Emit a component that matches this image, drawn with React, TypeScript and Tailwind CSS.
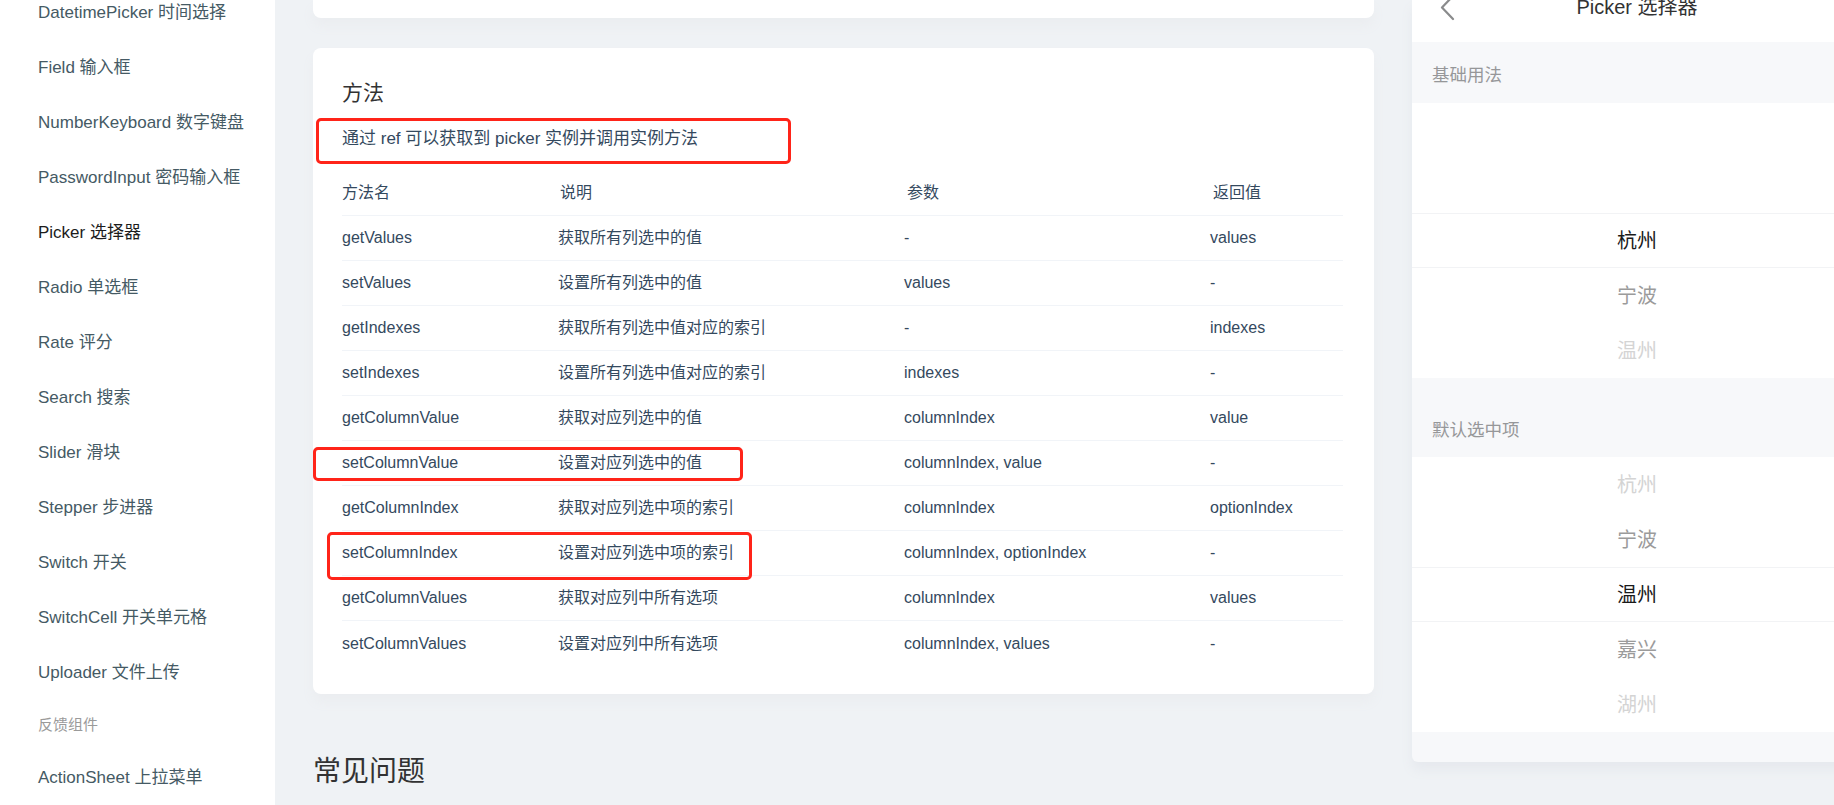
import React from "react";

const FONT = { fontFamily: '"Liberation Sans", Arial, "Noto Sans CJK SC", sans-serif' };

const navItems = [
  "DatetimePicker 时间选择",
  "Field 输入框",
  "NumberKeyboard 数字键盘",
  "PasswordInput 密码输入框",
  "Picker 选择器",
  "Radio 单选框",
  "Rate 评分",
  "Search 搜索",
  "Slider 滑块",
  "Stepper 步进器",
  "Switch 开关",
  "SwitchCell 开关单元格",
  "Uploader 文件上传",
];

const rows: [string, string, string, string][] = [
  ["getValues", "获取所有列选中的值", "-", "values"],
  ["setValues", "设置所有列选中的值", "values", "-"],
  ["getIndexes", "获取所有列选中值对应的索引", "-", "indexes"],
  ["setIndexes", "设置所有列选中值对应的索引", "indexes", "-"],
  ["getColumnValue", "获取对应列选中的值", "columnIndex", "value"],
  ["setColumnValue", "设置对应列选中的值", "columnIndex, value", "-"],
  ["getColumnIndex", "获取对应列选中项的索引", "columnIndex", "optionIndex"],
  ["setColumnIndex", "设置对应列选中项的索引", "columnIndex, optionIndex", "-"],
  ["getColumnValues", "获取对应列中所有选项", "columnIndex", "values"],
  ["setColumnValues", "设置对应列中所有选项", "columnIndex, values", "-"],
];

function Picker({ items, selected }: { items: string[]; selected: number }) {
  const colorFor = (i: number) => {
    const d = Math.abs(i - selected);
    if (d === 0) return "text-[#1a1a1a]";
    if (d === 1) return "text-[#9b9b9b]";
    return "text-[#d4d4d4]";
  };
  return (
    <div className="bg-white flex flex-col">
      {items.map((it, i) => (
        <div
          key={i}
          className={`h-[55px] flex items-center justify-center text-[20px] ${colorFor(i)} ${
            i === selected ? "border-y border-[#f2f3f5]" : ""
          }`}
        >
          {it}
        </div>
      ))}
    </div>
  );
}

export default function App() {
  return (
    <div className="w-[1834px] h-[805px] overflow-hidden flex bg-[#eff2f5]" style={FONT}>
      {/* Sidebar */}
      <div className="w-[275px] shrink-0 h-full bg-white overflow-hidden">
        <div className="-mt-[15px] flex flex-col">
          {navItems.map((n) => (
            <div
              key={n}
              className={`h-[55px] flex items-center pl-[38px] text-[17px] ${
                n.startsWith("Picker") ? "text-[#1c1c1c]" : "text-[#455a64]"
              }`}
            >
              {n}
            </div>
          ))}
          <div className="h-[50px] flex items-center pl-[38px] text-[15px] text-[#9a9a9a]">反馈组件</div>
          <div className="h-[55px] flex items-center pl-[38px] text-[17px] text-[#455a64]">ActionSheet 上拉菜单</div>
        </div>
      </div>

      {/* Main content */}
      <div className="w-[1137px] shrink-0 h-full pl-[38px] pr-[38px] overflow-hidden">
        <div className="h-[18px] bg-white rounded-b-[8px] shadow-[0_8px_12px_#ebedf0]" />
        <div className="relative mt-[30px] bg-white rounded-[8px] pt-[30px] px-[29px] pb-[28px] shadow-[0_8px_12px_#ebedf0]">
          <h3 className="text-[21px] leading-[30px] text-[#323233]">方法</h3>
          <p className="mt-[18px] text-[17px] leading-[26px] text-[#34495e]">
            通过 ref 可以获取到 picker 实例并调用实例方法
          </p>
          <div className="mt-[19px] w-[1001px] text-[16px] text-[#34495e]">
            <div className="grid grid-cols-[216px_346px_306px_133px] h-[45px] items-center border-b border-[#f1f4f8]">
              <div>方法名</div>
              <div className="pl-[2px]">说明</div>
              <div className="pl-[3px]">参数</div>
              <div className="pl-[3px]">返回值</div>
            </div>
            {rows.map((r, i) => (
              <div
                key={r[0]}
                className={`grid grid-cols-[216px_346px_306px_133px] h-[45px] items-center ${
                  i < rows.length - 1 ? "border-b border-[#f1f4f8]" : ""
                }`}
              >
                <div>{r[0]}</div>
                <div>{r[1]}</div>
                <div>{r[2]}</div>
                <div>{r[3]}</div>
              </div>
            ))}
          </div>

          {/* red annotation boxes */}
          <div className="absolute left-[3px] top-[70px] w-[475px] h-[46px] border-[3px] border-[#ff2419] rounded-[5px]" />
          <div className="absolute left-0 top-[399px] w-[430px] h-[34px] border-[3px] border-[#ff2419] rounded-[5px]" />
          <div className="absolute left-[14px] top-[484px] w-[425px] h-[48px] border-[3px] border-[#ff2419] rounded-[5px]" />
        </div>
        <h2 className="mt-[59px] text-[28px] leading-[38px] text-[#323233]">常见问题</h2>
      </div>

      {/* Phone simulator */}
      <div className="w-[450px] shrink-0 h-[762px] bg-[#f7f8fa] rounded-bl-[6px] overflow-hidden flex flex-col shadow-[0_8px_12px_#e6e9ee]">
        <div className="relative h-[42px] bg-white flex justify-center">
          <svg
            className="absolute left-[28px] top-[-5px]"
            width="16"
            height="26"
            viewBox="0 0 16 26"
            fill="none"
          >
            <path d="M13 1 L2 12.5 L13 24" stroke="#8a8b8c" strokeWidth="2.2" strokeLinecap="round" strokeLinejoin="round" />
          </svg>
          <div className="-mt-[3px] text-[20px] leading-[20px] text-[#323233]">Picker 选择器</div>
        </div>
        <div className="pl-[20px] pt-[22px] pb-[17px] text-[17.5px] leading-[22px] text-[#969799]">基础用法</div>
        <Picker items={["", "", "杭州", "宁波", "温州"]} selected={2} />
        <div className="pl-[20px] pt-[41px] pb-[16px] text-[17.5px] leading-[22px] text-[#969799]">默认选中项</div>
        <Picker items={["杭州", "宁波", "温州", "嘉兴", "湖州"]} selected={2} />
      </div>
    </div>
  );
}
